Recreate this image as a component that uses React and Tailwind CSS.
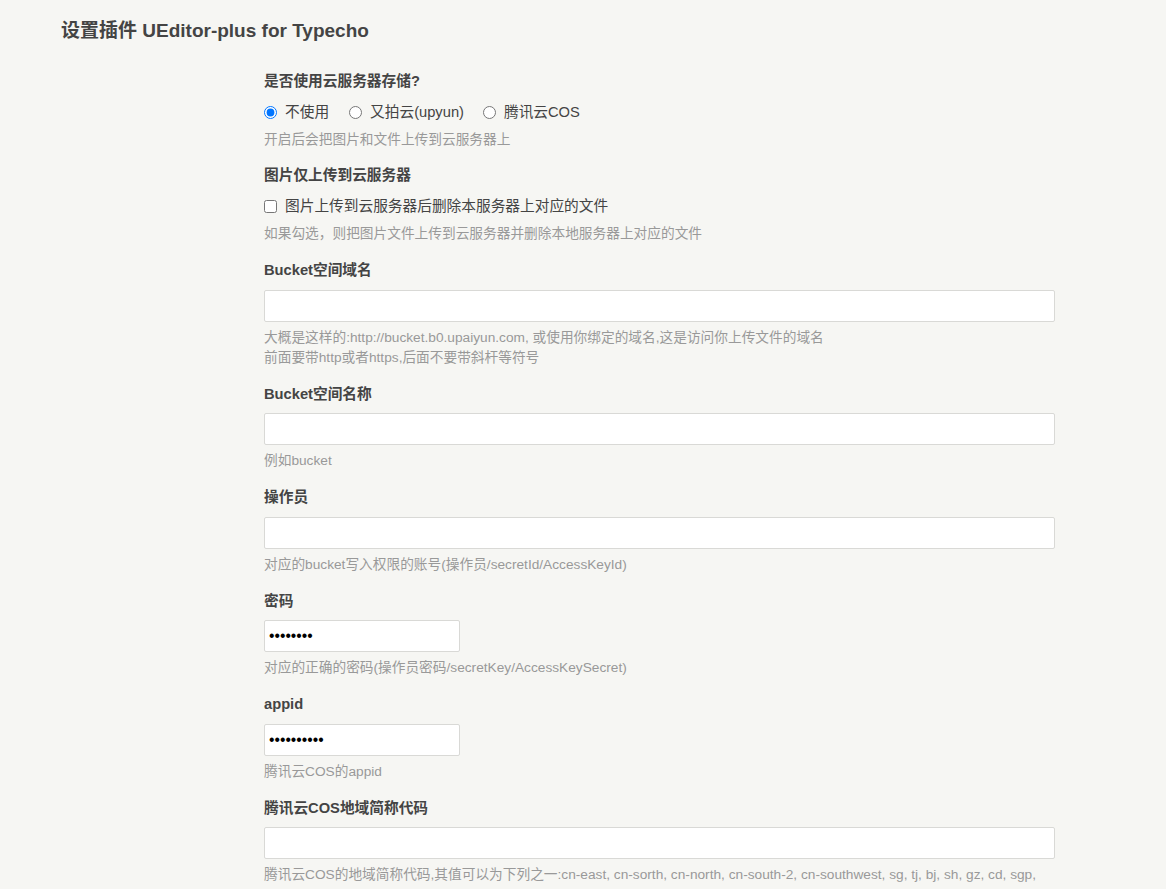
import React from "react";

const font = "font-['Liberation_Sans','Noto_Sans_CJK_SC',sans-serif]";

function Label({ children }) {
  return <div className="text-[14.7px] font-bold leading-[20px] text-[#444]">{children}</div>;
}

function Desc({ children }) {
  return <div className="text-[13.7px] leading-[20px] text-[#999]">{children}</div>;
}

function TextField({ label, desc, small, value, type = "text" }) {
  return (
    <div className="flex flex-col">
      <Label>{label}</Label>
      <input
        type={type}
        defaultValue={value}
        className={`mt-[9.5px] h-[32px] rounded-[2px] border border-[#d9d9d6] bg-white px-[4px] text-[15.6px] text-black outline-none ${
          small ? "w-[196px]" : "w-[791px]"
        }`}
      />
      <div className="mt-[6px]">{desc}</div>
    </div>
  );
}

export default function App() {
  return (
    <div className={`min-h-screen bg-[#f6f6f3] text-[#444] ${font}`}>
      <div className="pl-[61px] pt-[20px]">
        <h2 className="text-[19px] font-bold leading-[22px] text-[#444]">设置插件 UEditor-plus for Typecho</h2>
      </div>
      <form className="ml-[264px] mt-[29px] flex w-[791px] flex-col pb-[20px]">
        <div className="flex flex-col">
          <Label>是否使用云服务器存储?</Label>
          <div className="mt-[11px] flex h-[20px] items-center text-[14.7px] leading-[20px] text-[#444]">
            <label className="mr-[20px] flex items-center">
              <input type="radio" name="cloud" defaultChecked className="mr-[8px] h-[13px] w-[13px]" />
              不使用
            </label>
            <label className="mr-[19px] flex items-center">
              <input type="radio" name="cloud" className="mr-[8px] h-[13px] w-[13px]" />
              又拍云(upyun)
            </label>
            <label className="flex items-center">
              <input type="radio" name="cloud" className="mr-[8px] h-[13px] w-[13px]" />
              腾讯云COS
            </label>
          </div>
          <div className="mt-[8px]">
            <Desc>开启后会把图片和文件上传到云服务器上</Desc>
          </div>
        </div>

        <div className="mt-[15px] flex flex-col">
          <Label>图片仅上传到云服务器</Label>
          <div className="mt-[11px] flex h-[20px] items-center text-[14.7px] leading-[20px] text-[#444]">
            <label className="flex items-center">
              <input type="checkbox" className="mr-[8px] h-[13px] w-[13px]" />
              图片上传到云服务器后删除本服务器上对应的文件
            </label>
          </div>
          <div className="mt-[8px]">
            <Desc>如果勾选，则把图片文件上传到云服务器并删除本地服务器上对应的文件</Desc>
          </div>
        </div>

        <div className="mt-[16px]">
          <TextField
            label="Bucket空间域名"
            desc={
              <>
                <Desc>大概是这样的:http://bucket.b0.upaiyun.com, 或使用你绑定的域名,这是访问你上传文件的域名</Desc>
                <Desc>前面要带http或者https,后面不要带斜杆等符号</Desc>
              </>
            }
          />
        </div>
        <div className="mt-[16px]">
          <TextField label="Bucket空间名称" desc={<Desc>例如bucket</Desc>} />
        </div>
        <div className="mt-[16px]">
          <TextField label="操作员" desc={<Desc>对应的bucket写入权限的账号(操作员/secretId/AccessKeyId)</Desc>} />
        </div>
        <div className="mt-[16px]">
          <TextField
            label="密码"
            small
            type="password"
            value="12345678"
            desc={<Desc>对应的正确的密码(操作员密码/secretKey/AccessKeySecret)</Desc>}
          />
        </div>
        <div className="mt-[16px]">
          <TextField
            label="appid"
            small
            type="password"
            value="1234567890"
            desc={<Desc>腾讯云COS的appid</Desc>}
          />
        </div>
        <div className="mt-[16px]">
          <TextField
            label="腾讯云COS地域简称代码"
            desc={<Desc>腾讯云COS的地域简称代码,其值可以为下列之一:cn-east, cn-sorth, cn-north, cn-south-2, cn-southwest, sg, tj, bj, sh, gz, cd, sgp,</Desc>}
          />
        </div>
      </form>
    </div>
  );
}
